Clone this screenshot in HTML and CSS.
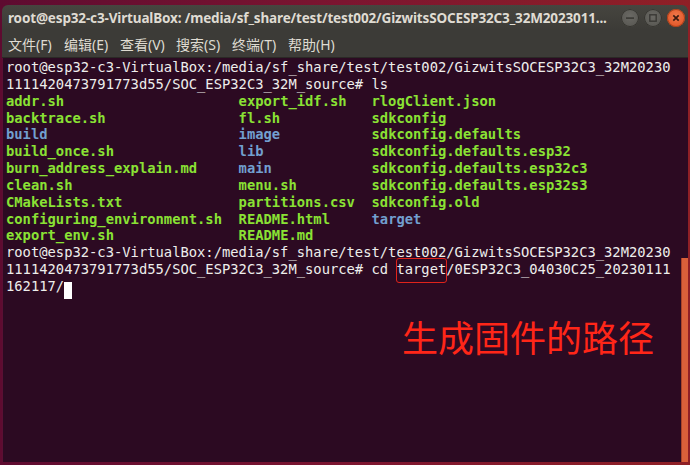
FILE: index.html
```html
<!DOCTYPE html>
<html>
<head>
	<title>Terminal</title>
	<link rel="stylesheet" href="styles.css">
</head>
<body>
	<div class="desktop">
		<div class="window">
			<!-- title bar -->
			<div class="titlebar">
				<span class="title">root@esp32-c3-VirtualBox: /media/sf_share/test/test002/GizwitsSOCESP32C3_32M2023011...</span>
				<div class="controls">
					<span class="btn min"><svg width="16" height="16" viewBox="0 0 16 16"><rect x="4" y="7.3" width="8" height="1.6" fill="#3a3935"/></svg></span>
					<span class="btn max"><svg width="16" height="16" viewBox="0 0 16 16"><rect x="4.8" y="4.8" width="6.4" height="6.4" fill="none" stroke="#3a3935" stroke-width="1.4"/></svg></span>
					<span class="btn close"><svg width="16" height="16" viewBox="0 0 16 16"><path d="M5.3 5.3 L10.7 10.7 M10.7 5.3 L5.3 10.7" stroke="#3c1a10" stroke-width="1.7"/></svg></span>
				</div>
			</div>
			<!-- menu -->
			<div class="menubar">
				<span class="menu">文件(F)</span>
				<span class="menu">编辑(E)</span>
				<span class="menu">查看(V)</span>
				<span class="menu">搜索(S)</span>
				<span class="menu">终端(T)</span>
				<span class="menu">帮助(H)</span>
			</div>
			<!-- terminal output -->
			<div class="term">
<pre class="out">root@esp32-c3-VirtualBox:/media/sf_share/test/test002/GizwitsSOCESP32C3_32M20230
1111420473791773d55/SOC_ESP32C3_32M_source# ls
<b class="g">addr.sh</b>                     <b class="g">export_idf.sh</b>   <b class="g">rlogClient.json</b>
<b class="g">backtrace.sh</b>                <b class="g">fl.sh</b>           <b class="g">sdkconfig</b>
<b class="d">build</b>                       <b class="d">image</b>           <b class="g">sdkconfig.defaults</b>
<b class="g">build_once.sh</b>               <b class="d">lib</b>             <b class="g">sdkconfig.defaults.esp32</b>
<b class="g">burn_address_explain.md</b>     <b class="d">main</b>            <b class="g">sdkconfig.defaults.esp32c3</b>
<b class="g">clean.sh</b>                    <b class="g">menu.sh</b>         <b class="g">sdkconfig.defaults.esp32s3</b>
<b class="g">CMakeLists.txt</b>              <b class="g">partitions.csv</b>  <b class="g">sdkconfig.old</b>
<b class="g">configuring_environment.sh</b>  <b class="g">README.html</b>     <b class="d">target</b>
<b class="g">export_env.sh</b>               <b class="g">README.md</b>
root@esp32-c3-VirtualBox:/media/sf_share/test/test002/GizwitsSOCESP32C3_32M20230
1111420473791773d55/SOC_ESP32C3_32M_source# cd <span class="mark">target</span>/0ESP32C3_04030C25_20230111
162117/<span class="cursor">&#160;</span></pre>
				<div class="note">生成固件的路径</div>
				<div class="thumb"></div>
			</div>
		</div>
	</div>
</body>
</html>
```
FILE: styles.css
```css
html, body {
	margin: 0;
	padding: 0;
}
.desktop {
	width: 690px;
	height: 465px;
	box-sizing: border-box;
	padding: 5px 2px 3px 2px;
	background: linear-gradient(90deg, #5e0b30, #7c1530 50%, #8f2026);
	overflow: hidden;
}
.window {
	height: 100%;
	display: flex;
	flex-direction: column;
	border-radius: 6px 6px 0 0;
	overflow: hidden;
}
.titlebar {
	height: 25px;
	flex: none;
	display: flex;
	align-items: center;
	gap: 2px;
	padding: 0 3px 0 6px;
	background: linear-gradient(#46453f, #3c3b37);
	font-family: "Noto Sans", sans-serif;
	font-weight: bold;
	font-size: 13.5px;
	color: #dfdbd2;
}
.title {
	flex: 1;
	min-width: 0;
	overflow: hidden;
	white-space: nowrap;
	letter-spacing: -0.15px;
}
.controls {
	flex: none;
	display: flex;
	gap: 5px;
	align-items: center;
}
.btn {
	width: 18px;
	height: 18px;
	border-radius: 50%;
	display: flex;
	align-items: center;
	justify-content: center;
	background: radial-gradient(circle at 50% 40%, #6a6964, #54534e);
	box-shadow: inset 0 0 0 1px #35342f;
}
.btn.close {
	background: radial-gradient(circle at 50% 40%, #f07a4c, #df4b1c);
	box-shadow: inset 0 0 0 1px #a8401c;
}
.menubar {
	height: 27px;
	flex: none;
	display: flex;
	align-items: center;
	gap: 12px;
	padding: 0 6px;
	background: #3c3b37;
	font-family: "Noto Sans", "Noto Sans CJK SC", sans-serif;
	font-size: 14px;
	color: #dfdbd2;
	border-bottom: 1px solid #2a2925;
}
.menu {
	width: 44px;
	white-space: nowrap;
}
.term {
	flex: 1;
	position: relative;
	background: #2c0a22;
	border-left: 1px solid #5a0f33;
	padding: 1px 9px 0 3px;
}
.out {
	margin: 0;
	font-family: "DejaVu Sans Mono", monospace;
	font-size: 13.8px;
	line-height: 16.85px;
	color: #eeeeec;
}
.out b {
	font-weight: bold;
}
.g {
	color: #8ae234;
}
.d {
	color: #729fcf;
}
.mark {
	position: relative;
}
.mark::after {
	content: "";
	position: absolute;
	left: 0;
	right: -1px;
	top: -3px;
	bottom: -6px;
	border: 1.5px solid #e0231b;
	border-radius: 3px;
}
.cursor {
	display: inline-block;
	width: 8px;
	height: 17px;
	vertical-align: -4px;
	background-color: #ffffff;
}
.note {
	margin: 16px 0 0 396px;
	font-family: "Noto Sans CJK SC", sans-serif;
	font-size: 36px;
	line-height: 42px;
	color: #ff2618;
}
.thumb {
	position: absolute;
	right: 0;
	top: 200px;
	bottom: 0;
	width: 6px;
	background: #d9603a;
	border-left: 1px solid #a84428;
}
```
